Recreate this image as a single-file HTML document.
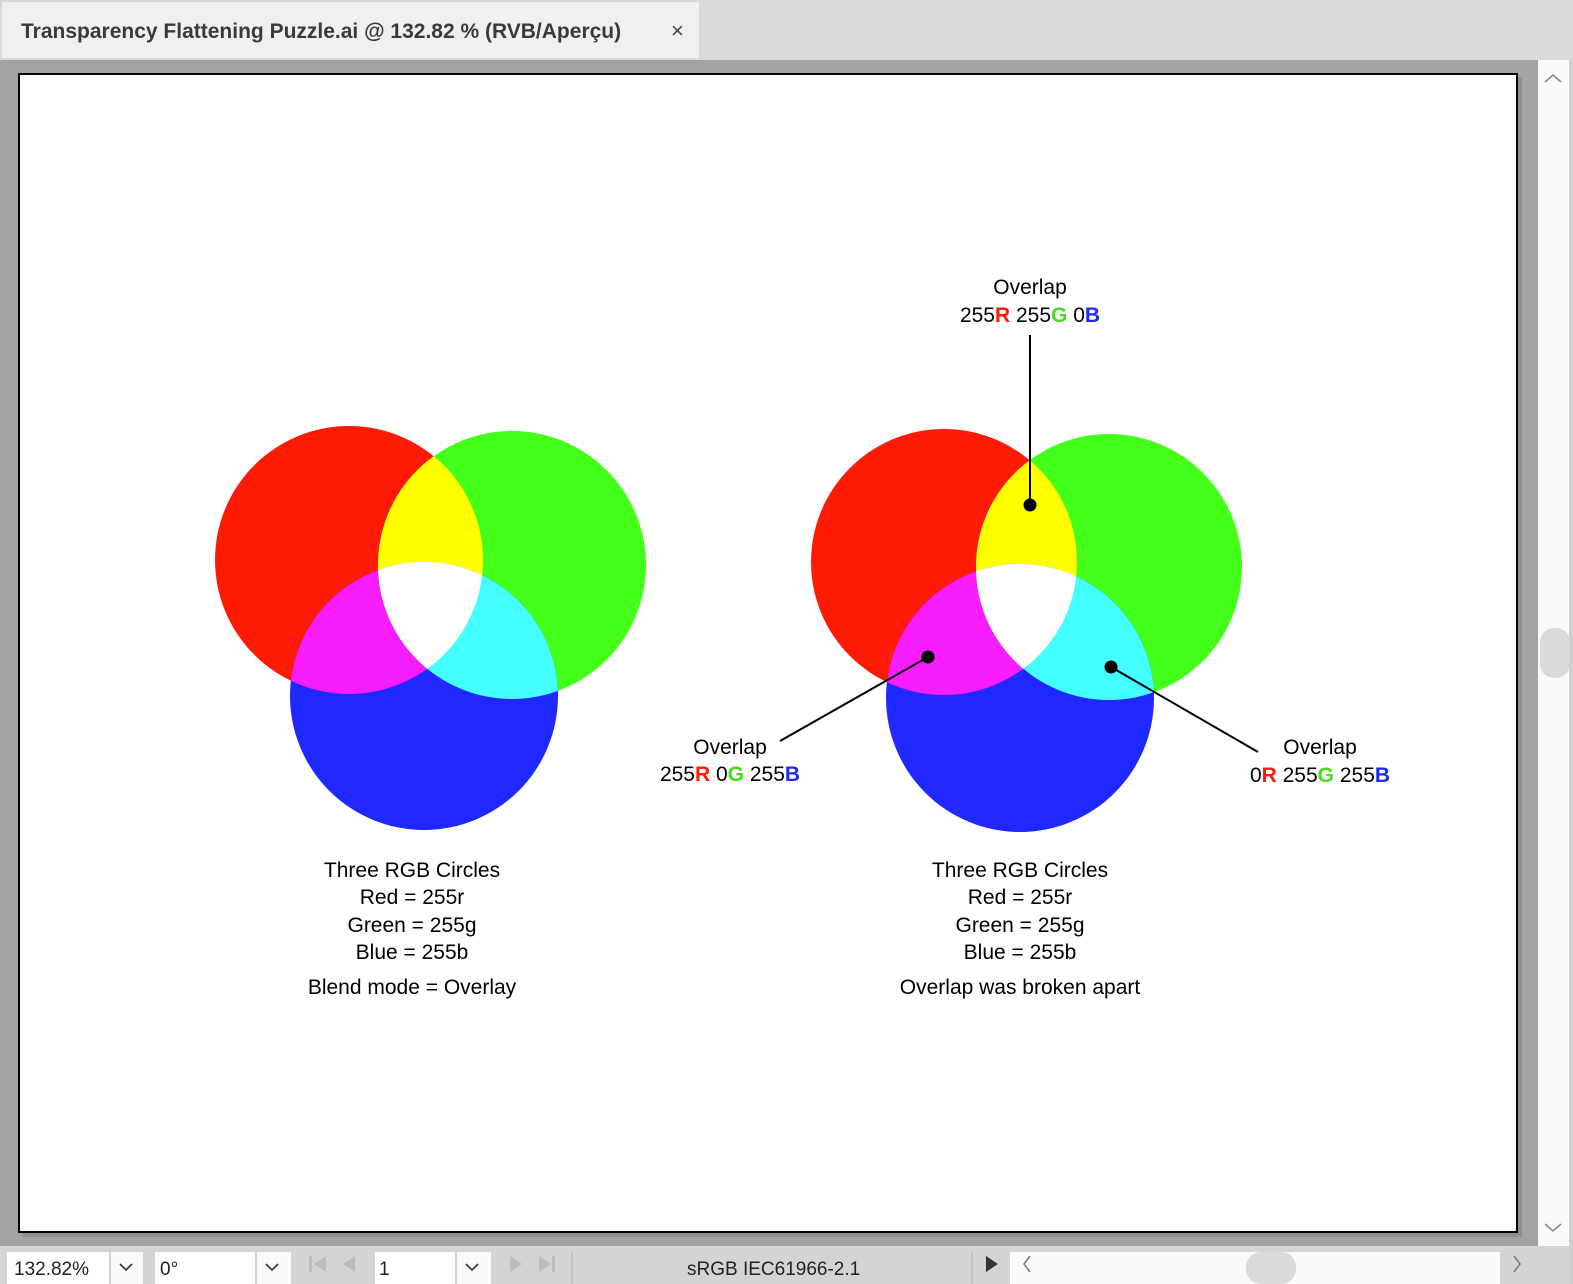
<!DOCTYPE html>
<html><head><meta charset="utf-8"><style>
html,body{margin:0;padding:0;width:1573px;height:1284px;overflow:hidden;background:#a3a3a3;}
svg{display:block}
text{font-family:"Liberation Sans",sans-serif;}
</style></head><body>
<svg width="1573" height="1284" viewBox="0 0 1573 1284" xmlns="http://www.w3.org/2000/svg">
<defs>
<clipPath id="lr"><circle cx="349" cy="560" r="134"/></clipPath>
<clipPath id="lg"><circle cx="512" cy="565" r="134"/></clipPath>
<clipPath id="lb"><circle cx="424" cy="696" r="134"/></clipPath>
<clipPath id="rr"><circle cx="944" cy="562" r="133"/></clipPath>
<clipPath id="rg"><circle cx="1109" cy="567" r="133"/></clipPath>
<clipPath id="rb"><circle cx="1020" cy="698" r="134"/></clipPath>
</defs>
<!-- tab bar -->
<rect x="0" y="0" width="1573" height="60" fill="#d9d9d9"/>
<rect x="2" y="2" width="697" height="56" fill="#f0f0f0"/>
<text x="21" y="38" font-size="21" font-weight="bold" fill="#3a3a3a">Transparency Flattening Puzzle.ai @ 132.82 % (RVB/Aperçu)</text>
<text x="671" y="38" font-size="22" fill="#444">×</text>
<!-- canvas -->
<rect x="0" y="60" width="1538" height="1186" fill="#a3a3a3"/>
<rect x="22" y="77" width="1500" height="1160" fill="#8e8e8e"/>
<rect x="19" y="74" width="1498" height="1158" fill="#fff" stroke="#000" stroke-width="2"/>
<!-- vertical scrollbar -->
<rect x="1538" y="60" width="31" height="1186" fill="#fafafa"/>
<rect x="1569" y="60" width="4" height="1224" fill="#cfcfcf"/>
<path d="M1545 82 L1553 75 L1561 82" fill="none" stroke="#888" stroke-width="1.5"/>
<path d="M1545 1224 L1553 1231 L1561 1224" fill="none" stroke="#888" stroke-width="1.5"/>
<rect x="1540" y="628" width="30" height="50" rx="14" fill="#dadada"/>
<!-- status bar -->
<rect x="0" y="1246" width="1569" height="38" fill="#d4d4d4"/>
<rect x="7" y="1252" width="102" height="32" fill="#fff"/>
<rect x="111" y="1252" width="32" height="32" fill="#fafafa"/>
<rect x="155" y="1252" width="100" height="32" fill="#fff"/>
<rect x="257" y="1252" width="34" height="32" fill="#fafafa"/>
<rect x="375" y="1252" width="80" height="32" fill="#fff"/>
<rect x="457" y="1252" width="34" height="32" fill="#fafafa"/>
<rect x="1010" y="1252" width="490" height="32" fill="#fafafa"/>
<text x="14" y="1275" font-size="19" fill="#222">132.82%</text>
<text x="160" y="1275" font-size="19" fill="#222">0°</text>
<text x="379" y="1275" font-size="19" fill="#222">1</text>
<text x="687" y="1275" font-size="19" fill="#222">sRGB IEC61966-2.1</text>
<g fill="none" stroke="#333" stroke-width="1.6">
<path d="M120 1264 L126 1270 L132 1264"/><path d="M266 1264 L272 1270 L278 1264"/><path d="M466 1264 L472 1270 L478 1264"/>
</g>
<g fill="#bdbdbd">
<rect x="309" y="1256" width="3" height="16"/><path d="M326 1256 L314 1264 L326 1272Z"/>
<path d="M355 1256 L343 1264 L355 1272Z"/>
<path d="M510 1256 L522 1264 L510 1272Z"/>
<path d="M539 1256 L551 1264 L539 1272Z"/><rect x="552" y="1256" width="3" height="16"/>
</g>
<rect x="571" y="1252" width="2" height="32" fill="#c4c4c4"/>
<rect x="971" y="1252" width="2" height="32" fill="#c4c4c4"/>
<path d="M986 1256 L998 1264 L986 1272Z" fill="#333"/>
<path d="M1030 1256 L1024 1264 L1030 1272" fill="none" stroke="#777" stroke-width="1.5"/>
<path d="M1514 1256 L1520 1264 L1514 1272" fill="none" stroke="#777" stroke-width="1.5"/>
<rect x="1246" y="1252" width="50" height="32" rx="15" fill="#dadada"/>

<!-- left circles -->
<circle cx="349" cy="560" r="134" fill="#ff1a05"/>
<circle cx="512" cy="565" r="134" fill="#44ff1a"/>
<circle cx="424" cy="696" r="134" fill="#1e28ff"/>
<g clip-path="url(#lr)"><circle cx="512" cy="565" r="134" fill="#ffff00"/><circle cx="424" cy="696" r="134" fill="#f71dff"/></g>
<g clip-path="url(#lg)"><circle cx="424" cy="696" r="134" fill="#44ffff"/></g>
<g clip-path="url(#lr)"><g clip-path="url(#lg)"><circle cx="424" cy="696" r="134" fill="#fff"/></g></g>
<!-- right circles -->
<circle cx="944" cy="562" r="133" fill="#ff1a05"/>
<circle cx="1109" cy="567" r="133" fill="#44ff1a"/>
<circle cx="1020" cy="698" r="134" fill="#1e28ff"/>
<g clip-path="url(#rr)"><circle cx="1109" cy="567" r="133" fill="#ffff00"/><circle cx="1020" cy="698" r="134" fill="#f71dff"/></g>
<g clip-path="url(#rg)"><circle cx="1020" cy="698" r="134" fill="#44ffff"/></g>
<g clip-path="url(#rr)"><g clip-path="url(#rg)"><circle cx="1020" cy="698" r="134" fill="#fff"/></g></g>
<!-- callouts -->
<g stroke="#000" stroke-width="2"><line x1="1030" y1="335" x2="1030" y2="505"/><line x1="928" y1="657" x2="780" y2="741"/><line x1="1111" y1="667" x2="1258" y2="752"/></g>
<circle cx="1030" cy="505" r="6.5"/><circle cx="928" cy="657" r="6.5"/><circle cx="1111" cy="667" r="6.5"/>

<g font-size="21" text-anchor="middle" fill="#000">
<text x="1030" y="294">Overlap</text>
<text x="1030" y="322">255<tspan fill="#ff1a05" font-weight="bold">R</tspan> 255<tspan fill="#44dd1a" font-weight="bold">G</tspan> 0<tspan fill="#1e28ff" font-weight="bold">B</tspan></text>
<text x="730" y="754">Overlap</text>
<text x="730" y="781">255<tspan fill="#ff1a05" font-weight="bold">R</tspan> 0<tspan fill="#44dd1a" font-weight="bold">G</tspan> 255<tspan fill="#1e28ff" font-weight="bold">B</tspan></text>
<text x="1320" y="754">Overlap</text>
<text x="1320" y="782">0<tspan fill="#ff1a05" font-weight="bold">R</tspan> 255<tspan fill="#44dd1a" font-weight="bold">G</tspan> 255<tspan fill="#1e28ff" font-weight="bold">B</tspan></text>

<text x="412" y="877">Three RGB Circles</text>
<text x="412" y="904">Red = 255r</text>
<text x="412" y="932">Green = 255g</text>
<text x="412" y="959">Blue = 255b</text>
<text x="412" y="994">Blend mode = Overlay</text>
<text x="1020" y="877">Three RGB Circles</text>
<text x="1020" y="904">Red = 255r</text>
<text x="1020" y="932">Green = 255g</text>
<text x="1020" y="959">Blue = 255b</text>
<text x="1020" y="994">Overlap was broken apart</text>
</g>
</svg>
</body></html>
